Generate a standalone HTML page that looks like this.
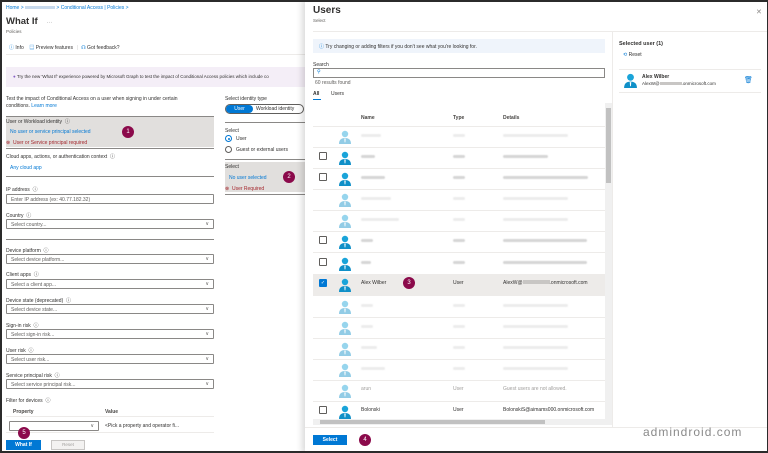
<!DOCTYPE html>
<html><head><meta charset="utf-8"><style>
*{box-sizing:border-box;margin:0;padding:0}
body{width:768px;height:453px;overflow:hidden;background:#fff;font-family:"Liberation Sans",sans-serif;color:#323130;position:relative;font-size:5.5px}
.a{position:absolute;white-space:nowrap}
.frame{position:absolute;inset:0;border:2px solid #2b2b2b;border-right-width:1px;pointer-events:none;z-index:50}
.blue{color:#0078d4}
.red{color:#a4262c}
.inp{position:absolute;border:1px solid #8a8886;background:#fff;height:10px;width:208px;left:6px;font-size:5px;color:#605e5c;padding:1.5px 4px;border-radius:1px}
.chev{position:absolute;right:4px;top:1px;font-size:5px;color:#605e5c}
.badge{position:absolute;width:12px;height:12px;border-radius:50%;background:#8b0a4b;color:#fff;font-size:6px;text-align:center;line-height:12px;z-index:5}
.lbl{font-size:5px;color:#323130}
.row{position:absolute;left:313px;width:292px;height:21px;border-bottom:1px solid #edebe9}
.cb{position:absolute;left:6px;top:4px;width:8px;height:8px;border:1px solid #605e5c;border-radius:1px;background:#fff}
.av{position:absolute;left:26px;top:3px;width:12px;height:14px}
.fade .av{opacity:.45}
.blur{position:absolute;height:3px;background:#d6d6d6;border-radius:2px;top:7px;filter:blur(.6px)}
.fade .blur{background:#ececec}
.t{position:absolute;top:5px;font-size:5px}
</style></head><body>
<div class="frame"></div>

<!-- LEFT -->
<div class="a blue" style="left:6px;top:5px;font-size:5px">Home &gt; <span style="display:inline-block;width:30px;height:3px;background:#c7d9ec;vertical-align:middle"></span> &gt; Conditional Access | Policies &gt;</div>
<div class="a" style="left:6px;top:16px;font-size:9.5px;font-weight:bold;color:#323130">What If <span style="font-weight:normal;color:#999;font-size:6px;margin-left:6px">···</span></div>
<div class="a" style="left:6px;top:29px;font-size:4.5px;color:#605e5c">Policies</div>
<div class="a" style="left:9px;top:44px;font-size:5px"><span class="blue">ⓘ</span> Info &nbsp;&nbsp; <span class="blue">▤</span> Preview features &nbsp; <span style="color:#ccc">|</span> &nbsp;<span class="blue">☊</span> Got feedback?</div>
<div class="a" style="left:6px;top:54px;width:299px;height:1px;background:#edebe9"></div>
<div class="a" style="left:6px;top:67px;width:299px;height:20px;background:#f4eef7"></div>
<div class="a" style="left:13px;top:74px;font-size:4.5px"><span style="color:#8661c5">●</span> Try the new 'What If' experience powered by Microsoft Graph to test the impact of Conditional Access policies which include co</div>
<div class="a" style="left:6px;top:96px;font-size:5px;line-height:7px">Test the impact of Conditional Access on a user when signing in under certain<br>conditions. <span class="blue">Learn more</span></div>
<div class="a" style="left:6px;top:116px;width:208px;height:1px;background:#8a8886"></div>
<div class="a" style="left:6px;top:117px;width:208px;height:30px;background:#e1dfdd"></div>
<div class="a" style="left:6px;top:118px;font-size:5px">User or Workload identity &nbsp;ⓘ</div>
<div class="a blue" style="left:10px;top:129px;font-size:5px">No user or service principal selected</div>
<div class="a red" style="left:6px;top:140px;font-size:5px">⊗ &nbsp;User or Service principal required</div>
<div class="badge" style="left:122px;top:126px">1</div>
<div class="a" style="left:6px;top:148px;width:208px;height:1px;background:#8a8886"></div>
<div class="a" style="left:6px;top:153px;font-size:5px">Cloud apps, actions, or authentication context &nbsp;ⓘ</div>
<div class="a blue" style="left:10px;top:165px;font-size:5px">Any cloud app</div>
<div class="a" style="left:6px;top:176px;width:208px;height:1px;background:#8a8886"></div>
<div class="a lbl" style="left:6px;top:186px">IP address &nbsp;ⓘ</div>
<div class="inp" style="top:194px">Enter IP address (ex: 40.77.182.32)</div>
<div class="a lbl" style="left:6px;top:212px">Country &nbsp;ⓘ</div>
<div class="inp" style="top:219px">Select country...<span class="chev">∨</span></div>
<div class="a" style="left:6px;top:239px;width:208px;height:1px;background:#8a8886"></div>
<div class="a lbl" style="left:6px;top:247px">Device platform &nbsp;ⓘ</div>
<div class="inp" style="top:254px">Select device platform...<span class="chev">∨</span></div>
<div class="a lbl" style="left:6px;top:271px">Client apps &nbsp;ⓘ</div>
<div class="inp" style="top:279px">Select a client app...<span class="chev">∨</span></div>
<div class="a lbl" style="left:6px;top:297px">Device state (deprecated) &nbsp;ⓘ</div>
<div class="inp" style="top:304px">Select device state...<span class="chev">∨</span></div>
<div class="a lbl" style="left:6px;top:322px">Sign-in risk &nbsp;ⓘ</div>
<div class="inp" style="top:329px">Select sign-in risk...<span class="chev">∨</span></div>
<div class="a lbl" style="left:6px;top:347px">User risk &nbsp;ⓘ</div>
<div class="inp" style="top:354px">Select user risk...<span class="chev">∨</span></div>
<div class="a lbl" style="left:6px;top:372px">Service principal risk &nbsp;ⓘ</div>
<div class="inp" style="top:379px">Select service principal risk...<span class="chev">∨</span></div>
<div class="a lbl" style="left:6px;top:397px">Filter for devices &nbsp;ⓘ</div>
<div class="a lbl" style="left:13px;top:409px;font-weight:bold;color:#484644">Property</div>
<div class="a lbl" style="left:105px;top:409px;font-weight:bold;color:#484644">Value</div>
<div class="a" style="left:6px;top:416px;width:208px;height:1px;background:#edebe9"></div>
<div class="inp" style="top:421px;left:9px;width:90px"><span class="chev">∨</span></div>
<div class="a" style="left:105px;top:423px;font-size:5px">&lt;Pick a property and operator fi...</div>
<div class="a" style="left:6px;top:432px;width:208px;height:1px;background:#edebe9"></div>
<div class="badge" style="left:18px;top:427px">5</div>
<div class="a" style="left:6px;top:440px;width:35px;height:10px;background:#0078d4;color:#fff;font-size:5px;text-align:center;line-height:10px;font-weight:bold">What If</div>
<div class="a" style="left:51px;top:440px;width:34px;height:10px;background:#f3f2f1;border:1px solid #c8c6c4;color:#a19f9d;font-size:4.5px;text-align:center;line-height:8px">Reset</div>

<div class="a lbl" style="left:225px;top:96px">Select identity type</div>
<div class="a" style="left:225px;top:104px;width:79px;height:10px;border:1px solid #605e5c;border-radius:5px"></div>
<div class="a" style="left:226px;top:105px;width:27px;height:8px;background:#0078d4;border-radius:4px;color:#fff;font-size:5px;text-align:center;line-height:8px">User</div>
<div class="a lbl" style="left:256px;top:106px">Workload identity</div>
<div class="a" style="left:225px;top:122px;width:80px;height:1px;background:#8a8886"></div>
<div class="a lbl" style="left:225px;top:128px">Select</div>
<div class="a" style="left:225px;top:135px;width:7px;height:7px;border:1px solid #0078d4;border-radius:50%"><div style="margin:1.5px;width:2px;height:2px;border-radius:50%;background:#0078d4"></div></div>
<div class="a lbl" style="left:236px;top:136px">User</div>
<div class="a" style="left:225px;top:146px;width:7px;height:7px;border:1px solid #605e5c;border-radius:50%"></div>
<div class="a lbl" style="left:236px;top:147px">Guest or external users</div>
<div class="a" style="left:225px;top:159px;width:80px;height:1px;background:#8a8886"></div>
<div class="a" style="left:225px;top:162px;width:80px;height:30px;background:#e1dfdd"></div>
<div class="a lbl" style="left:225px;top:164px">Select</div>
<div class="a blue" style="left:229px;top:175px;font-size:5px">No user selected</div>
<div class="a red" style="left:225px;top:186px;font-size:5px">⊗ &nbsp;User Required</div>
<div class="badge" style="left:283px;top:171px">2</div>
<div class="a" style="left:225px;top:194px;width:80px;height:1px;background:#8a8886"></div>

<!-- USERS PANEL -->
<div class="a" style="left:305px;top:0;width:463px;height:453px;background:#fff;box-shadow:-3px 0 6px rgba(0,0,0,.15)"></div>
<div class="a" style="left:313px;top:5px;font-size:10px;font-weight:bold">Users</div>
<div class="a" style="left:313px;top:18px;font-size:4.5px;color:#605e5c">Select</div>
<div class="a" style="left:313px;top:31px;width:455px;height:1px;background:#edebe9"></div>
<div class="a" style="left:612px;top:32px;width:1px;height:395px;background:#edebe9"></div>
<div class="a" style="left:313px;top:39px;width:292px;height:14px;background:#eff4fb"></div>
<div class="a" style="left:319px;top:43px;font-size:5px"><span class="blue">ⓘ</span> Try changing or adding filters if you don't see what you're looking for.</div>
<div class="a lbl" style="left:313px;top:62px">Search</div>
<div class="a" style="left:313px;top:68px;width:292px;height:10px;border:1px solid #8a8886;font-size:5px;padding-left:3px;color:#0078d4">⚲</div>
<div class="a lbl" style="left:315px;top:80px;color:#605e5c">60 results found</div>
<div class="a lbl" style="left:313px;top:91px;font-weight:bold">All</div>
<div class="a" style="left:313px;top:99px;width:8px;height:1px;background:#0078d4"></div>
<div class="a lbl" style="left:331px;top:91px">Users</div>
<div class="a lbl" style="left:361px;top:115px;font-weight:bold;color:#484644">Name</div>
<div class="a lbl" style="left:453px;top:115px;font-weight:bold;color:#484644">Type</div>
<div class="a lbl" style="left:503px;top:115px;font-weight:bold;color:#484644">Details</div>
<div class="a" style="left:313px;top:126px;width:292px;height:1px;background:#edebe9"></div>

<svg width="0" height="0" style="position:absolute"><defs><symbol id="u" viewBox="0 0 12 14"><circle cx="6" cy="4" r="3.2" fill="#1aa4d9"/><path d="M0 14 Q0 8 6 8 Q12 8 12 14Z" fill="#1090c8"/><path d="M5.3 8.5 L6.7 8.5 L6.4 12 L6 12.6 L5.6 12Z" fill="#fff"/></symbol></defs></svg>

<div class="row fade" style="top:127px"><svg class="av"><use href="#u"/></svg><div class="blur" style="left:48px;width:20px"></div><div class="blur" style="left:140px;width:12px"></div><div class="blur" style="left:190px;width:65px"></div></div>
<div class="row" style="top:148px"><div class="cb"></div><svg class="av"><use href="#u"/></svg><div class="blur" style="left:48px;width:14px"></div><div class="blur" style="left:140px;width:12px"></div><div class="blur" style="left:190px;width:45px"></div></div>
<div class="row" style="top:169px"><div class="cb"></div><svg class="av"><use href="#u"/></svg><div class="blur" style="left:48px;width:24px"></div><div class="blur" style="left:140px;width:12px"></div><div class="blur" style="left:190px;width:85px"></div></div>
<div class="row fade" style="top:190px"><svg class="av"><use href="#u"/></svg><div class="blur" style="left:48px;width:30px"></div><div class="blur" style="left:140px;width:12px"></div><div class="blur" style="left:190px;width:65px"></div></div>
<div class="row fade" style="top:211px"><svg class="av"><use href="#u"/></svg><div class="blur" style="left:48px;width:38px"></div><div class="blur" style="left:140px;width:12px"></div><div class="blur" style="left:190px;width:65px"></div></div>
<div class="row" style="top:232px"><div class="cb"></div><svg class="av"><use href="#u"/></svg><div class="blur" style="left:48px;width:12px"></div><div class="blur" style="left:140px;width:12px"></div><div class="blur" style="left:190px;width:84px"></div></div>
<div class="row" style="top:254px"><div class="cb"></div><svg class="av"><use href="#u"/></svg><div class="blur" style="left:48px;width:10px"></div><div class="blur" style="left:140px;width:12px"></div><div class="blur" style="left:190px;width:84px"></div></div>
<div class="row" style="top:275px;background:#edebe9"><div class="cb" style="background:#0078d4;border-color:#0078d4;color:#fff;font-size:5px;line-height:6px;text-align:center">✓</div><svg class="av"><use href="#u"/></svg><div class="t" style="left:48px">Alex Wilber</div><div class="t" style="left:140px">User</div><div class="t" style="left:190px">AlexW@<span style="display:inline-block;width:27px;height:4px;background:#c8c6c4"></span>.onmicrosoft.com</div></div>
<div class="badge" style="left:403px;top:277px">3</div>
<div class="row fade" style="top:297px"><svg class="av"><use href="#u"/></svg><div class="blur" style="left:48px;width:12px"></div><div class="blur" style="left:140px;width:12px"></div><div class="blur" style="left:190px;width:65px"></div></div>
<div class="row fade" style="top:318px"><svg class="av"><use href="#u"/></svg><div class="blur" style="left:48px;width:12px"></div><div class="blur" style="left:140px;width:12px"></div><div class="blur" style="left:190px;width:65px"></div></div>
<div class="row fade" style="top:339px"><svg class="av"><use href="#u"/></svg><div class="blur" style="left:48px;width:16px"></div><div class="blur" style="left:140px;width:12px"></div><div class="blur" style="left:190px;width:65px"></div></div>
<div class="row fade" style="top:360px"><svg class="av"><use href="#u"/></svg><div class="blur" style="left:48px;width:24px"></div><div class="blur" style="left:140px;width:12px"></div><div class="blur" style="left:190px;width:65px"></div></div>
<div class="row fade" style="top:381px"><svg class="av"><use href="#u"/></svg><div class="t" style="left:48px;color:#a19f9d">arun</div><div class="t" style="left:140px;color:#a19f9d">User</div><div class="t" style="left:190px;color:#a19f9d">Guest users are not allowed.</div></div>
<div class="row" style="top:402px;border:none"><div class="cb"></div><svg class="av"><use href="#u"/></svg><div class="t" style="left:48px">Bolonski</div><div class="t" style="left:140px">User</div><div class="t" style="left:190px">BolonskiS@aimams000.onmicrosoft.com</div></div>
<div class="a" style="left:605px;top:103px;width:7px;height:321px;background:#f0f0f0"></div>
<div class="a" style="left:606px;top:108px;width:5px;height:75px;background:#c1c1c1"></div>
<div class="a" style="left:313px;top:419px;width:299px;height:6px;background:#f0f0f0"></div>
<div class="a" style="left:320px;top:420px;width:225px;height:4px;background:#c1c1c1"></div>
<div class="a" style="left:305px;top:427px;width:463px;height:1px;background:#edebe9"></div>
<div class="a" style="left:313px;top:435px;width:34px;height:10px;background:#0078d4;color:#fff;font-size:5px;text-align:center;line-height:10px;font-weight:bold">Select</div>
<div class="badge" style="left:359px;top:434px">4</div>
<div class="a" style="left:643px;top:425px;font-size:12px;color:#8a8a8a;letter-spacing:1px">admindroid.com</div>

<!-- selected user -->
<div class="a" style="left:756px;top:8px;font-size:7px;color:#8a8886">✕</div>
<div class="a" style="left:619px;top:41px;font-size:5.5px;font-weight:bold">Selected user (1)</div>
<div class="a" style="left:623px;top:52px;font-size:5px"><span class="blue">⟲</span> Reset</div>
<div class="a" style="left:619px;top:69px;width:142px;height:1px;background:#edebe9"></div>
<svg class="a" style="left:624px;top:73px" width="13" height="15"><use href="#u"/></svg>
<div class="a" style="left:642px;top:74px;font-size:5px;font-weight:bold">Alex Wilber</div>
<div class="a" style="left:642px;top:81px;font-size:4.5px">AlexW@<span style="display:inline-block;width:22px;height:3px;background:#c8c6c4"></span>.onmicrosoft.com</div>
<div class="a blue" style="left:744px;top:76px;font-size:7px">🗑</div>
<div class="a" style="left:619px;top:92px;width:142px;height:1px;background:#edebe9"></div>
</body></html>
